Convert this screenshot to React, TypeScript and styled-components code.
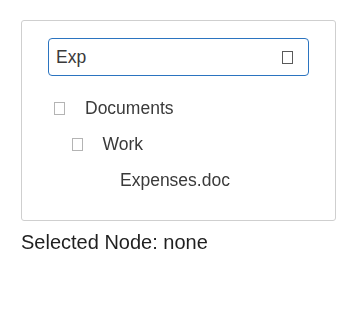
import styled, { createGlobalStyle } from "styled-components";

const Global = createGlobalStyle`
  html, body {
    margin: 0;
    background: #fff;
    font-family: "Liberation Sans", Arial, sans-serif;
  }
`;

const Page = styled.div`
  padding: 20px 4px 0 21px;
`;

const Card = styled.div`
  width: 315px;
  box-sizing: border-box;
  border: 1px solid #cfcfcf;
  border-radius: 3px;
  padding: 17px 26px 22px 26px;
`;

const SearchBox = styled.div`
  display: flex;
  align-items: center;
  height: 38px;
  box-sizing: border-box;
  border: 1px solid #2b74c0;
  border-radius: 4px;
  padding: 0 15px 0 7px;
`;

const SearchInput = styled.input`
  flex: 1;
  min-width: 0;
  border: none;
  outline: none;
  padding: 0;
  font-family: inherit;
  font-size: 17.5px;
  color: #3a3a3a;
  caret-color: #222;
  background: transparent;
`;

const Glyph = styled.span<{ $tone: "dark" | "light"; $hidden?: boolean }>`
  display: inline-block;
  width: 11px;
  height: 13px;
  box-sizing: border-box;
  border: 1px solid ${(p) => (p.$tone === "dark" ? "#5a5a5a" : "#b4b4b4")};
  visibility: ${(p) => (p.$hidden ? "hidden" : "visible")};
  flex: none;
`;

const Tree = styled.ul`
  list-style: none;
  margin: 14px 0 0 0;
  padding: 0;
`;

const Row = styled.li<{ $level: number }>`
  display: flex;
  align-items: center;
  height: 36px;
  padding-left: ${(p) => 6 + p.$level * 17.5}px;
  gap: 20px;
  font-size: 17.5px;
  color: #3a3a3a;
`;

const Status = styled.div`
  margin-top: 10px;
  font-size: 20px;
  color: #1f1f1f;
`;

const nodes = [
  { label: "Documents", level: 0, leaf: false },
  { label: "Work", level: 1, leaf: false },
  { label: "Expenses.doc", level: 2, leaf: true },
];

export default function App() {
  return (
    <Page>
      <Global />
      <Card>
        <SearchBox>
          <SearchInput defaultValue="Exp" autoFocus />
          <Glyph $tone="dark" />
        </SearchBox>
        <Tree>
          {nodes.map((n) => (
            <Row key={n.label} $level={n.level}>
              <Glyph $tone="light" $hidden={n.leaf} />
              <span>{n.label}</span>
            </Row>
          ))}
        </Tree>
      </Card>
      <Status>Selected Node: none</Status>
    </Page>
  );
}
